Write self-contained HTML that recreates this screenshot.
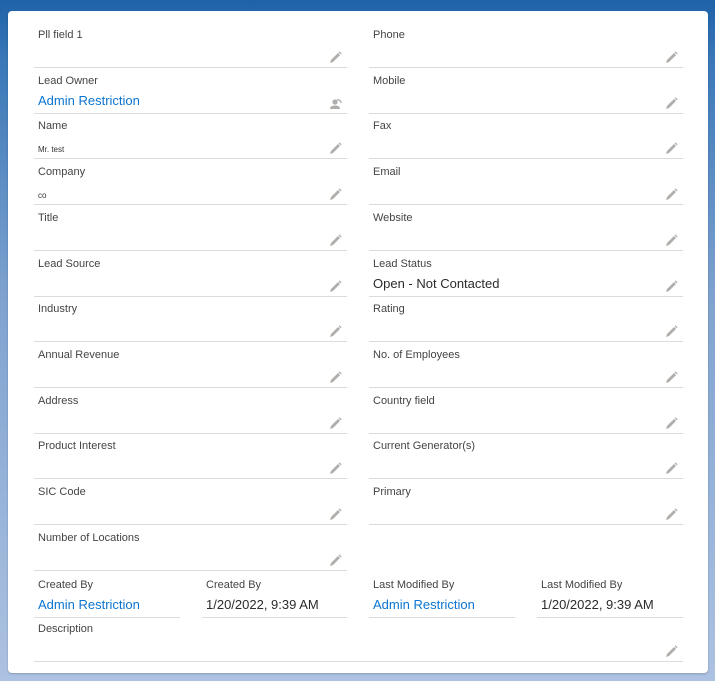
<!DOCTYPE html>
<html><head><style>
html,body{margin:0;padding:0}
body{width:715px;height:681px;overflow:hidden;position:relative;font-family:"Liberation Sans",sans-serif;
background:linear-gradient(180deg,#1f62a8 0px,#3a78b8 60px,#7fa3d0 300px,#adc2e2 681px);}
.card{position:absolute;left:8px;top:11px;width:700px;height:662px;background:#fff;border-radius:4px;box-shadow:0 1px 2px rgba(0,0,0,.2)}
.f{position:absolute;height:45px;border-bottom:1px solid #dddbda;box-sizing:content-box}
.l{position:absolute;left:4px;top:6px;font-size:11px;color:#444;line-height:14px;white-space:nowrap}
.v{position:absolute;left:4px;top:25px;font-size:13px;color:#2b2b2b;line-height:16px;white-space:nowrap}
.a{color:#0b75d1}
.p{position:absolute;right:5px;top:29px;width:13px;height:13px}
.s{font-size:8px;top:29px;color:#333}
</style></head><body>
<div class="card"></div>
<div id="c"></div>
<script>
var L=[["Pll field 1",""],["Lead Owner","Admin Restriction","a","u"],["Name","Mr. test","s"],["Company","co","s"],["Title",""],["Lead Source",""],["Industry",""],["Annual Revenue",""],["Address",""],["Product Interest",""],["SIC Code",""],["Number of Locations",""]];
var R=[["Phone",""],["Mobile",""],["Fax",""],["Email",""],["Website",""],["Lead Status","Open - Not Contacted"],["Rating",""],["No. of Employees",""],["Country field",""],["Current Generator(s)",""],["Primary",""]];
var pen='<svg class="p" viewBox="0 0 13 13"><path d="M1 12 L2 9 L9 2 L11 4 L4 11 Z" fill="#b0adab"/><path d="M9.6 1.4 L10.6 0.4 L12.6 2.4 L11.6 3.4Z" fill="#b0adab"/></svg>';
var usr='<svg class="p" viewBox="0 0 13 13"><circle cx="6" cy="5" r="2.6" fill="#b0adab"/><path d="M1 12 Q1 8.5 6 8.5 Q11 8.5 11 12Z" fill="#b0adab"/><path d="M8 3 A3 3 0 0 1 12 6" stroke="#b0adab" stroke-width="1.3" fill="none"/></svg>';
var h='';
function row(x,w,top,d,icon){
 var v=d[1]?'<div class="v '+(d[2]||'')+'">'+d[1]+'</div>':'';
 var ic=icon===false?'':(d[3]=='u'?usr:pen);
 return '<div class="f" style="left:'+x+'px;width:'+w+'px;top:'+top+'px"><div class="l">'+d[0]+'</div>'+v+ic+'</div>';
}
for(var i=0;i<L.length;i++)h+=row(34,313,22+i*45.7,L[i]);
for(var i=0;i<R.length;i++)h+=row(369,314,22+i*45.7,R[i]);
var t=23.5+12*45.7;
h+=row(34,146,t,["Created By","Admin Restriction","a"],false);
h+=row(202,145,t,["Created By","1/20/2022, 9:39 AM"],false);
h+=row(369,146,t,["Last Modified By","Admin Restriction","a"],false);
h+=row(537,146,t,["Last Modified By","1/20/2022, 9:39 AM"],false);
h+=row(34,649,22+13*45.7,["Description",""]);
document.getElementById('c').innerHTML=h;
</script>
</body></html>
